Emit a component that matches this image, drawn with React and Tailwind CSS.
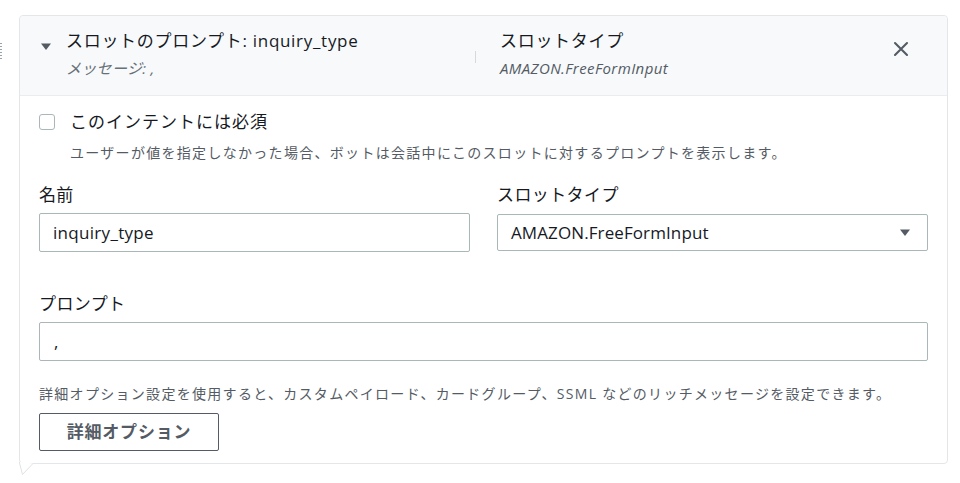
import React from "react";

const font = { fontFamily: '"Open Sans","Noto Sans CJK JP",sans-serif' };

export default function App() {
  return (
    <div className="relative w-[960px] h-[483px] bg-white text-[#16191f]" style={font}>
      {/* drag grip at far left */}
      <svg className="absolute left-0 top-[43px]" width="3" height="16" viewBox="0 0 3 16">
        {[0, 3, 6, 9, 12, 15].map((y) => (
          <rect key={y} x="0" y={y} width="2" height="1" fill="#9aa3ab" />
        ))}
      </svg>
      <div className="pt-[15px] pl-[19px]">
        <div className="relative w-[929px] h-[449px] border border-[#e3e7ea] rounded-[4px] bg-white">
          {/* header */}
          <div className="flex items-start h-[80px] bg-[#f7f9fb] border-b border-[#e9edf0] rounded-t-[4px]">
            <div className="flex items-start w-[455px] pl-[20px] pt-[13px]">
              <svg className="mt-[13px] shrink-0" width="12" height="9" viewBox="0 0 12 9">
                <path d="M1 1.5 L11 1.5 L6 8 Z" fill="#545b64" />
              </svg>
              <div className="ml-[14px]">
                <div className="text-[17px] leading-[24px] tracking-[0.7px] whitespace-nowrap">
                  スロットのプロンプト: inquiry_type
                </div>
                <div className="text-[15px] leading-[20px] mt-[5px] italic tracking-[0.3px] text-[#687078]">メッセージ: ,</div>
              </div>
            </div>
            <div className="w-px h-[12px] bg-[#d5dbdb] mt-[35px]" />
            <div className="flex-1 pl-[24px] pt-[13px]">
              <div className="text-[17px] leading-[24px] tracking-[0.7px]">スロットタイプ</div>
              <div className="text-[15px] leading-[20px] mt-[5px] italic tracking-[0.4px] text-[#545b64]">AMAZON.FreeFormInput</div>
            </div>
            <svg className="mt-[25px] mr-[38px]" width="16" height="16" viewBox="0 0 16 16">
              <path d="M2 2 L14 14 M14 2 L2 14" stroke="#545b64" strokeWidth="2.1" strokeLinecap="round" />
            </svg>
          </div>
          {/* body */}
          <div className="px-[19px] pt-[17px]">
            <div className="flex items-start">
              <div className="w-[16px] h-[16px] mt-[1px] border border-[#aab7b8] rounded-[3px] bg-white shrink-0" />
              <div className="ml-[15px]">
                <div className="text-[17px] leading-[18px] tracking-[1px]">このインテントには必須</div>
                <div className="text-[14px] leading-[18px] mt-[13px] tracking-[1.3px] text-[#545b64] whitespace-nowrap">
                  ユーザーが値を指定しなかった場合、ボットは会話中にこのスロットに対するプロンプトを表示します。
                </div>
              </div>
            </div>
            <div className="flex gap-[27px] mt-[22px]">
              <div className="w-[431px]">
                <div className="text-[17px] leading-[22px] tracking-[0.2px]">名前</div>
                <div className="mt-[7px] h-[39px] border border-[#aab7b8] rounded-[2px] flex items-center pl-[13px] text-[17px] tracking-[0.3px]">
                  inquiry_type
                </div>
              </div>
              <div className="w-[431px]">
                <div className="text-[17px] leading-[22px] tracking-[0.4px]">スロットタイプ</div>
                <div className="mt-[8px] h-[37px] border border-[#aab7b8] rounded-[2px] flex items-center justify-between pl-[13px] pr-[16px] text-[17px] tracking-[0.1px]">
                  <span>AMAZON.FreeFormInput</span>
                  <svg width="12" height="9" viewBox="0 0 12 9">
                    <path d="M1 1.5 L11 1.5 L6 8 Z" fill="#545b64" />
                  </svg>
                </div>
              </div>
            </div>
            <div className="mt-[41px] text-[17px] leading-[22px] tracking-[0.4px]">プロンプト</div>
            <div className="mt-[7px] w-[889px] h-[39px] border border-[#aab7b8] rounded-[2px] flex items-center pl-[14px] text-[17px]">
              ,
            </div>
            <div className="mt-[24px] text-[14px] leading-[18px] tracking-[1.3px] text-[#545b64] whitespace-nowrap">
              詳細オプション設定を使用すると、カスタムペイロード、カードグループ、SSML などのリッチメッセージを設定できます。
            </div>
            <button className="mt-[10px] w-[180px] h-[38px] border border-[#545b64] rounded-[2px] bg-white text-[17px] tracking-[0.8px] font-bold text-[#545b64] flex items-center justify-center">
              詳細オプション
            </button>
          </div>
          {/* tail */}
          <svg className="absolute left-[-1px] top-[446px]" width="16" height="15" viewBox="0 0 16 15">
            <path d="M0.5 0 L0.5 1 L3.5 12.5 L14 1.5" fill="white" stroke="#dfe3e6" strokeWidth="1" />
          </svg>
        </div>
      </div>
    </div>
  );
}
